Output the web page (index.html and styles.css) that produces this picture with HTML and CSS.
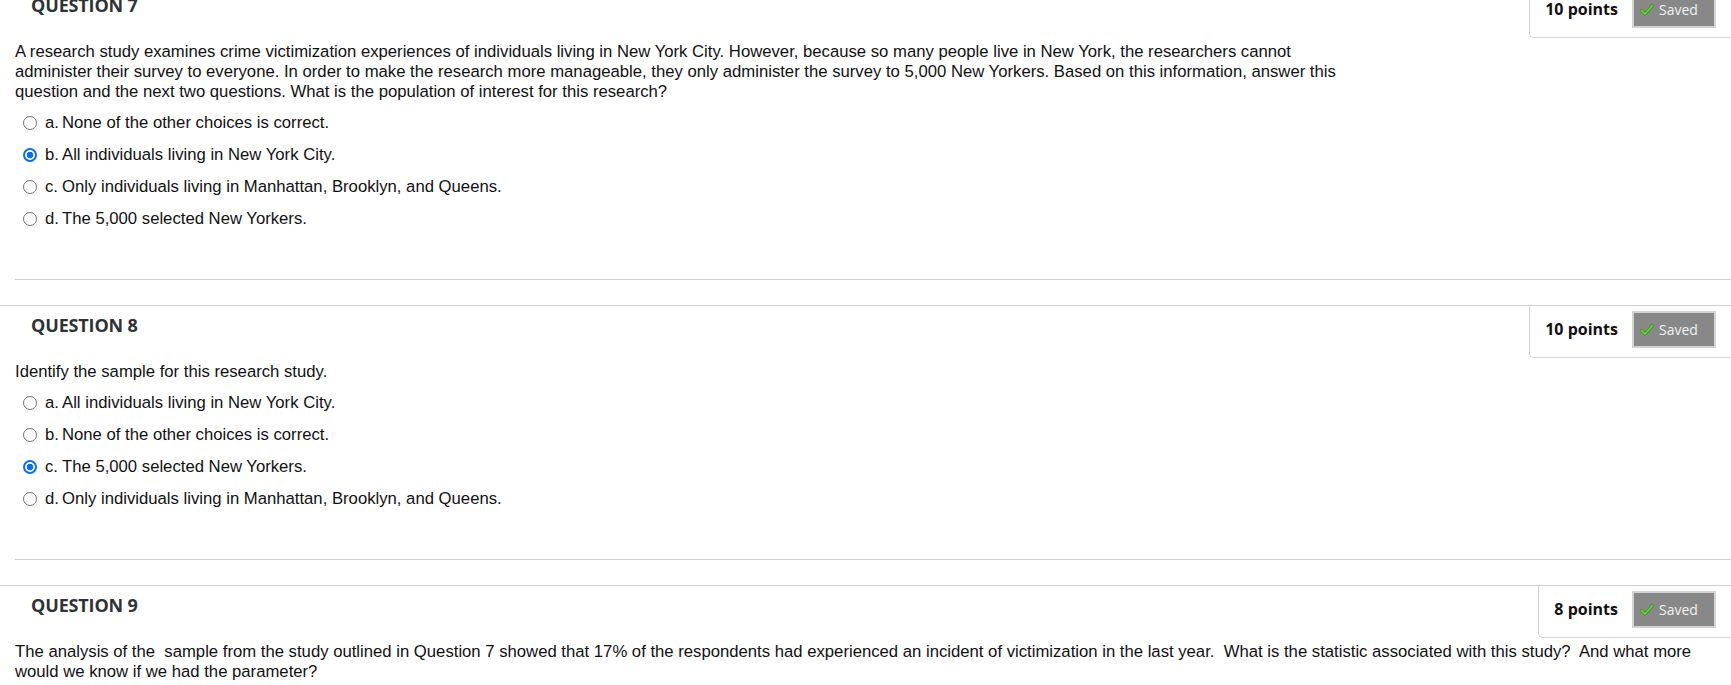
FILE: index.html
```html
<!DOCTYPE html>
<html lang="en">
<head>
<meta charset="utf-8">
<title>Test</title>
<link rel="stylesheet" href="styles.css">
</head>
<body>
<div class="page">

  <section class="question">
    <div class="q-head">
      <h3 class="q-title">QUESTION 7</h3>
      <div class="points">
        <span class="pts">10 points</span>
        <span class="saved"><svg class="check" viewBox="0 0 14 12" width="14" height="12"><path d="M1.5 6.5 L5 10 L12.5 1.5" fill="none" stroke="#3a9a1c" stroke-width="3" stroke-linecap="round" stroke-linejoin="round"/><path d="M1.5 6.5 L5 10 L12.5 1.5" fill="none" stroke="#66d22e" stroke-width="1.6" stroke-linecap="round" stroke-linejoin="round"/></svg>Saved</span>
      </div>
    </div>
    <p class="q-text">A research study examines crime victimization experiences of individuals living in New York City. However, because so many people live in New York, the researchers cannot<br>administer their survey to everyone. In order to make the research more manageable, they only administer the survey to 5,000 New Yorkers. Based on this information, answer this<br>question and the next two questions. What is the population of interest for this research?</p>
    <ul class="choices">
      <li class="choice"><input type="radio" name="q7" class="radio"><span class="letter">a.</span><span class="answer">None of the other choices is correct.</span></li>
      <li class="choice"><input type="radio" name="q7" class="radio" checked><span class="letter">b.</span><span class="answer">All individuals living in New York City.</span></li>
      <li class="choice"><input type="radio" name="q7" class="radio"><span class="letter">c.</span><span class="answer">Only individuals living in Manhattan, Brooklyn, and Queens.</span></li>
      <li class="choice"><input type="radio" name="q7" class="radio"><span class="letter">d.</span><span class="answer">The 5,000 selected New Yorkers.</span></li>
    </ul>
    <div class="sep"></div>
  </section>

  <section class="question">
    <div class="q-head">
      <h3 class="q-title">QUESTION 8</h3>
      <div class="points">
        <span class="pts">10 points</span>
        <span class="saved"><svg class="check" viewBox="0 0 14 12" width="14" height="12"><path d="M1.5 6.5 L5 10 L12.5 1.5" fill="none" stroke="#3a9a1c" stroke-width="3" stroke-linecap="round" stroke-linejoin="round"/><path d="M1.5 6.5 L5 10 L12.5 1.5" fill="none" stroke="#66d22e" stroke-width="1.6" stroke-linecap="round" stroke-linejoin="round"/></svg>Saved</span>
      </div>
    </div>
    <p class="q-text">Identify the sample for this research study.</p>
    <ul class="choices">
      <li class="choice"><input type="radio" name="q8" class="radio"><span class="letter">a.</span><span class="answer">All individuals living in New York City.</span></li>
      <li class="choice"><input type="radio" name="q8" class="radio"><span class="letter">b.</span><span class="answer">None of the other choices is correct.</span></li>
      <li class="choice"><input type="radio" name="q8" class="radio" checked><span class="letter">c.</span><span class="answer">The 5,000 selected New Yorkers.</span></li>
      <li class="choice"><input type="radio" name="q8" class="radio"><span class="letter">d.</span><span class="answer">Only individuals living in Manhattan, Brooklyn, and Queens.</span></li>
    </ul>
    <div class="sep"></div>
  </section>

  <section class="question">
    <div class="q-head">
      <h3 class="q-title">QUESTION 9</h3>
      <div class="points">
        <span class="pts">8 points</span>
        <span class="saved"><svg class="check" viewBox="0 0 14 12" width="14" height="12"><path d="M1.5 6.5 L5 10 L12.5 1.5" fill="none" stroke="#3a9a1c" stroke-width="3" stroke-linecap="round" stroke-linejoin="round"/><path d="M1.5 6.5 L5 10 L12.5 1.5" fill="none" stroke="#66d22e" stroke-width="1.6" stroke-linecap="round" stroke-linejoin="round"/></svg>Saved</span>
      </div>
    </div>
    <p class="q-text">The analysis of the&nbsp; sample from the study outlined in Question 7 showed that 17% of the respondents had experienced an incident of victimization in the last year.&nbsp; What is the statistic associated with this study?&nbsp; And what more would we know if we had the parameter?</p>
  </section>

</div>
</body>
</html>
```

FILE: styles.css
```css
html, body {
  margin: 0;
  padding: 0;
  background: #ffffff;
  overflow: hidden;
}

body {
  font-family: "Liberation Sans", Arial, sans-serif;
  color: #111111;
}

.page {
  margin-top: -15px;
}

.question {
  border-top: 1px solid #cfcfcf;
}

.q-head {
  display: flex;
  justify-content: space-between;
  align-items: flex-start;
}

.q-title {
  margin: 7px 0 0 31px;
  font-family: "Open Sans", "Liberation Sans", sans-serif;
  font-weight: 700;
  font-size: 18px;
  line-height: 24px;
  color: #2f3336;
  letter-spacing: -0.15px;
}

.points {
  display: flex;
  align-items: flex-start;
  gap: 14px;
  height: 52px;
  box-sizing: border-box;
  padding: 5px 15px 0 15px;
  border-left: 1px solid #d2d2d2;
  border-bottom: 1px solid #d2d2d2;
  border-bottom-left-radius: 5px;
}

.pts {
  font-family: "Open Sans", "Liberation Sans", sans-serif;
  font-weight: 700;
  font-size: 16px;
  line-height: 37px;
  color: #111111;
}

.saved {
  display: flex;
  align-items: center;
  width: 84px;
  height: 37px;
  box-sizing: border-box;
  padding-left: 6px;
  background: #888888;
  border: 2px solid #d3d3d3;
  font-family: "Open Sans", "Liberation Sans", sans-serif;
  font-size: 14px;
  color: #f2f2f2;
}

.check {
  margin-right: 5px;
  flex: none;
}

.q-text {
  margin: 4px 0 0 0;
  padding: 0 15px;
  font-size: 16.7px;
  line-height: 20px;
}

.choices {
  list-style: none;
  margin: 5px 0 0 0;
  padding: 0 0 0 23px;
}

.choice {
  display: flex;
  align-items: center;
  height: 32px;
  font-size: 16.7px;
}

.radio {
  appearance: none;
  -webkit-appearance: none;
  width: 14px;
  height: 14px;
  margin: 0 8px 0 0;
  flex: none;
  box-sizing: border-box;
  border: 1px solid #707070;
  border-radius: 50%;
  background: #ffffff;
}

.radio:checked {
  border: 2px solid #0a6ef5;
  background: radial-gradient(circle, #0a6ef5 0 3px, #ffffff 3.6px);
}

.letter {
  width: 17px;
  flex: none;
}

.sep {
  margin: 44px 0 25px 15px;
  border-top: 1px solid #cfcfcf;
}
```
